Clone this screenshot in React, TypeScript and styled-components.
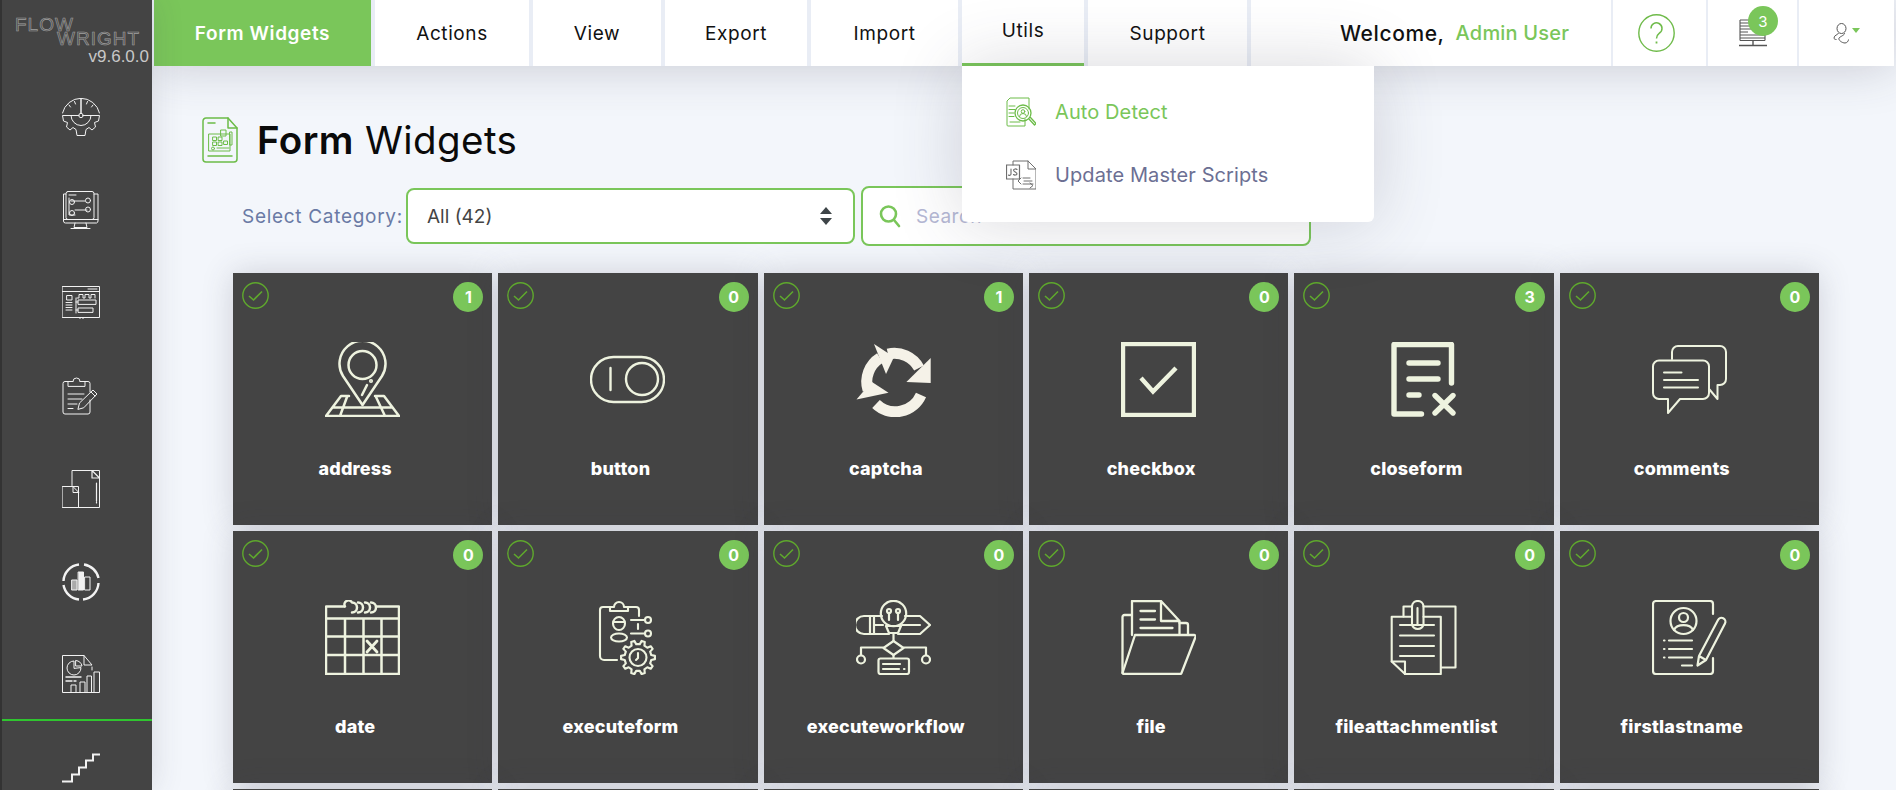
import React from 'react';
import styled, { createGlobalStyle } from 'styled-components';

const green = '#7ac65a';
const ui = `Inter, "Noto Sans", sans-serif`;

const GlobalStyle = createGlobalStyle`
  html, body { margin: 0; padding: 0; height: 100%; overflow: hidden; background: #f3f6fb; }
  * { box-sizing: border-box; }
  body { font-family: ${ui}; }
`;

// draws a toothed gear outline, used by the executeform icon
function gearPath(cx: number, cy: number, outer: number, inner: number, teeth: number) {
  const pts: string[] = [];
  const step = (Math.PI * 2) / teeth;
  for (let i = 0; i < teeth; i++) {
    const a = i * step;
    const w = step * 0.22;
    [[-w * 1.3, inner], [-w * 0.7, outer], [w * 0.7, outer], [w * 1.3, inner]].forEach(([d, r]) => {
      pts.push(`${(cx + Math.cos(a + d) * r).toFixed(2)} ${(cy + Math.sin(a + d) * r).toFixed(2)}`);
    });
  }
  return 'M' + pts.join('L') + 'Z';
}

const Svg = styled.svg<{ $sw?: number }>`
  display: block;
  fill: none;
  stroke: currentColor;
  stroke-width: ${(p) => p.$sw ?? 2};
  stroke-linecap: round;
  stroke-linejoin: round;
`;

const W = ({ children, sw }: { children: React.ReactNode; sw?: number }) => (
  <Svg width="75" height="75" viewBox="0 0 75 75" $sw={sw}>{children}</Svg>
);

const AddressIcon = () => (
  <W sw={2.5}>
    <path d="M37.5 63L18 34A23 23 0 1 1 57 34Z" />
    <circle cx="37.5" cy="23" r="14" />
    <path d="M42 43L37 53" />
    <circle cx="46" cy="39" r="0.8" />
    <path d="M24 54H16L1 74H74L59 54H50M8 65.5H67M22 55L15 74M51 55L60 74" />
  </W>
);

const ButtonIcon = () => (
  <W sw={2.4}>
    <rect x="1" y="15" width="73" height="45" rx="22.5" />
    <circle cx="52" cy="37" r="16" />
    <path d="M20.5 26V48" />
  </W>
);

const CaptchaIcon = () => (
  <W sw={11}>
    <g stroke="#f5f2e8" fill="none" strokeLinecap="butt">
      <path d="M32 12A28 28 0 0 1 63 26" />
      <path d="M65 53A28 28 0 0 1 20 62" />
      <path d="M12 48A28 28 0 0 1 24 16" />
    </g>
    <g fill="#f5f2e8" stroke="none">
      <path d="M74.7 16V41L50.4 40Z" />
      <path d="M18 2L38 15L30 32Z" />
      <path d="M0.5 57.5L15.6 39.7L32.5 50.7Z" />
    </g>
  </W>
);

const CheckboxIcon = () => (
  <W sw={4.4}>
    <g strokeLinecap="butt" strokeLinejoin="miter">
      <rect x="2" y="2" width="71" height="71" />
      <path d="M20 36L32 49.5L55 26" />
    </g>
  </W>
);

const CloseformIcon = () => (
  <W sw={5.4}>
    <path d="M65.5 41V2.5H8V72H35.5" />
    <path d="M23 21H52M23 37H52M23 53H33M49 53.5L67 71M67 53.5L49 71" />
  </W>
);

const CommentsIcon = () => (
  <W sw={2}>
    <path d="M20 17V10A6 6 0 0 1 26 4H68A6 6 0 0 1 74 10V37A6 6 0 0 1 68 43H65.5V57L57.5 47.5" />
    <path d="M7 18.5H51A6 6 0 0 1 57 24.5V51A6 6 0 0 1 51 57H28L16 71V57H7A6 6 0 0 1 1 51V24.5A6 6 0 0 1 7 18.5Z" />
    <path d="M12 30.5H29.5M12 38H46M12 45.5H46" />
  </W>
);

const DateIcon = () => (
  <W sw={2.5}>
    <g strokeLinecap="butt">
      <path d="M20 6.5H1V74H74V6.5H51" />
      <path d="M1 18.5H74M1 36.500H74M1 55H74M20 18.5V74M38.500 18.5V74M56.500 18.5V74" />
    </g>
    <path d="M42 41L52 52M52 41L42 52" strokeWidth="2.800" />
    <path d="M20 6.500A4 4 0 0 1 27 2.500A5 5 0 0 1 27 12.500M33 2.500A5 5 0 0 1 33 12.500M40 2.500A5 5 0 0 1 40 12.500M46 2.500A5 5 0 0 1 46 12.500" />
  </W>
);

const ExecuteFormIcon = () => (
  <W sw={2.1}>
    <path d="M20 7H13A3 3 0 0 0 10 10V56A4 4 0 0 0 14 60H27M38 7H46A3 3 0 0 1 49 10V16" />
    <path d="M20 11V7H24A5 5 0 0 1 34 7H38V11Z" />
    <ellipse cx="29" cy="23.500" rx="6" ry="6.500" />
    <path d="M23.500 22H34.500" />
    <ellipse cx="29" cy="37.500" rx="8" ry="4" />
    <path d="M41 20H55M41 33.500H55M48 24V29" />
    <circle cx="58" cy="20" r="3" />
    <circle cx="58" cy="33.500" r="3" />
    <path d={gearPath(48, 57.5, 17, 13.5, 10)} />
    <circle cx="48" cy="57.500" r="8.500" />
    <path d="M48 53V58L46 60" />
  </W>
);

const ExecuteWorkflowIcon = () => (
  <W sw={2.2}>
    <circle cx="37.500" cy="13.500" r="12.700" />
    <path d="M33 20V13M42 20V13M30 26H45L42 33H33ZM37.500 33V41" />
    <circle cx="33" cy="11" r="2" />
    <circle cx="42" cy="11" r="2" />
    <path d="M26 16H8A8.500 8.500 0 0 0 8 34H33M42 34H64L74 25L64 16H49" />
    <path d="M14 16V34M18 16V34M18 25H27M46 25H64" />
    <path d="M37.500 41L47.500 48L37.500 55L27.500 48Z" />
    <path d="M27 47.500H5V55M48 47.500H70V55M37.500 55V58" />
    <circle cx="5" cy="59.500" r="4" />
    <circle cx="70" cy="59.500" r="4" />
    <rect x="22.500" y="58.500" width="30.500" height="15.500" rx="2" />
    <path d="M27 64H44M27 69H43M48 69H48.500" />
  </W>
);

const FileIcon = () => (
  <W sw={2.3}>
    <path d="M11 35V1H40L58.500 21V34M40 1V21H58.500" />
    <path d="M11 15H3.500A2 2 0 0 0 1.500 17V73M58.500 23H65A2 2 0 0 1 67 25V34" />
    <path d="M14 35H73A1.500 1.500 0 0 1 74.500 37L60.500 73A1.500 1.500 0 0 1 59 74H2.500A1.500 1.500 0 0 1 1.500 73Z" />
    <path d="M19.500 11H34M19.500 19.500H34M19.500 28H51.500" />
  </W>
);

const FileAttachmentIcon = () => (
  <W sw={2.1}>
    <path d="M17.500 16.500V6.500H25.500M37.500 6.500H69.500V67.500H55" />
    <path d="M25.500 16.700H5.700V61.500L19 74H54.800V16.700H37.500" />
    <path d="M5.700 61.500H19V74" />
    <path d="M26 21V6A5.800 5.800 0 0 1 37.500 6V24A5.800 5.800 0 0 1 26 24V21M31.500 8V24" />
    <path d="M14 25H48M14 35.500H48M14 46H48M14 56H48" />
  </W>
);

const FirstLastIcon = () => (
  <W sw={2.2}>
    <path d="M61 14V4A3 3 0 0 0 58 1H4A3 3 0 0 0 1 4V71A3 3 0 0 0 4 74H58A3 3 0 0 0 61 71V58" />
    <circle cx="31.500" cy="21" r="13" />
    <circle cx="31.500" cy="17.500" r="4.500" />
    <path d="M22 30A10 7 0 0 1 41 30" />
    <path d="M17 40.500H40M17 49H40M17 57.500H40M30 65.500H40M12 40.500H12.500M12 49H12.500M12 57.500H12.500" />
    <path d="M45.500 65.500L47 56L66 20A3.500 3.500 0 0 1 73 23.500L54 60ZM47 56L54 60" />
  </W>
);

// sidebar icons, 38px box, thin white line art
const S = ({ children, h = 38 }: { children: React.ReactNode; h?: number }) => (
  <Svg width="38" height={h} viewBox={`0 0 38 ${h}`} $sw={1}>{children}</Svg>
);

const GaugeIcon = () => (
  <S>
    <path d="M0.500 15A19 19 0 0 1 37.500 15" />
    <path d="M19 0.500V15" strokeWidth="1.500" />
    <path d="M7 7L8.500 9M12.500 3.500L13.500 6M25.500 3.500L24.500 6M31 7L29.500 9" />
    <circle cx="19" cy="17.500" r="2.200" />
    <path d="M17 17.500H0.500L1.500 23L5.500 24.500L4.500 29L8 32L11 29.500L14 31.500L15 37.500H23L24 31.500L27 29.500L30 32L33.500 29L32.500 24.500L36.500 23L37.500 17.500H21" />
    <path d="M9 17.500A10 10 0 0 0 29 17.500" />
  </S>
);

const MonitorIcon = () => (
  <S>
    <rect x="4" y="0.500" width="28" height="28" rx="2" />
    <path d="M4 3H1.500V30A2 2 0 0 0 3.500 32H34.500A2 2 0 0 0 36 30V3H32M1.500 28.500H36M13 32L12 36.500H25L24 32M9 37.500H28" />
    <path d="M7 4H14M9 10H23M13 19H25M7 7V24H13" />
    <circle cx="26" cy="9.500" r="2.500" />
    <circle cx="10" cy="11" r="2.500" />
    <circle cx="26" cy="18.500" r="2.500" />
    <circle cx="10" cy="22" r="2.500" />
  </S>
);

const LayoutIcon = () => (
  <S h={33}>
    <rect x="0.500" y="0.500" width="37" height="31" />
    <path d="M0.500 5.500H37.500M26 3H35M5 9.500H10V14H5ZM4 16.500H10M4 19H10M4 21.500H10M4 24H10" />
    <path d="M15 12H17V8.500H21V12H23V8.500H27V12H29V8.500H33V12M14 12V27" />
    <path d="M16 18V14H34V18ZM16 26V22H31V26Z" />
    <path d="M14 16H16M14 24H16M18 32V33M21 32V33" />
  </S>
);

const ClipboardIcon = () => (
  <S>
    <path d="M11 4.500H3A2 2 0 0 0 1 6.500V35A2 2 0 0 0 3 37H26A2 2 0 0 0 28 35V23M28 15V6.500A2 2 0 0 0 26 4.500H18" />
    <path d="M6 9V4.500H11A3.500 3.500 0 0 1 18 4.500H23V9Z" />
    <path d="M6 17H22M6 22H20M6 27H15M6 31.500H11" />
    <path d="M16 32L17.500 26L31 13L35 17L22 30.500ZM29 15L33 19" />
  </S>
);

const DocsIcon = () => (
  <S>
    <path d="M10 15.500V0.500H37.500V37.500H16.500" />
    <rect x="0.500" y="16.500" width="16" height="21" />
    <path d="M30 0.500V8H37.500M30 0.500L37.500 8M34.500 13V31M34.500 32V33" strokeWidth="1.200" />
    <path d="M11 17V22.500H16.500Z" />
  </S>
);

const ChartIcon = () => (
  <S>
    <g strokeWidth="2.400" strokeLinecap="butt">
      <path d="M22 1.500A17.500 17.500 0 0 1 36.500 15M36.500 20A17.500 17.500 0 0 1 21 36.500M17 36.500A17.500 17.500 0 0 1 1.500 22M1.500 18A17.500 17.500 0 0 1 17 1.500" />
    </g>
    <rect x="10" y="17" width="5" height="10" fill="#aaa" />
    <rect x="16.500" y="9" width="5" height="18" fill="currentColor" />
    <rect x="23" y="14" width="5" height="13" />
  </S>
);

const ReportIcon = () => (
  <S>
    <path d="M30 12V15M26 37.500H0.500V0.500H22L30 10H22V0.500" />
    <path d="M19 13A7 7 0 1 1 12 6V13Z" />
    <path d="M14 5.500A7 7 0 0 1 20 11H14Z" />
    <path d="M4 22H19M4 26H10M12 26H14" strokeWidth="1.400" />
    <path d="M9 37.500V30H14V37.500M18 37.500V27H23V37.500M25 37.500V21H29.500V37.500M32 37.500V17H37.500V37.500H26" />
  </S>
);

const StairsIcon = () => (
  <S h={30}>
    <g strokeWidth="2" strokeLinecap="square" strokeLinejoin="miter">
      <path d="M1 28.500H10V21.500H17V14.500H24V7.500H31V1.500H37" />
    </g>
  </S>
);

const TitleIcon = () => (
  <Svg width="36" height="46" viewBox="0 0 36 46" $sw={1.5}>
    <path d="M1 4A3 3 0 0 1 4 1H26L35 11V42A3 3 0 0 1 32 45H4A3 3 0 0 1 1 42Z" />
    <path d="M26 1V11H35M6 6H13M6 39H30" />
    <g strokeWidth="1">
      <rect x="7" y="17" width="21" height="17" />
      <rect x="19" y="13" width="5" height="6" />
      <rect x="28" y="15" width="2" height="13" />
      <rect x="11" y="20" width="3.500" height="3.500" />
      <rect x="16.500" y="20" width="3.500" height="3.500" />
      <rect x="22" y="24" width="3.500" height="3.500" />
      <rect x="11" y="25" width="3.500" height="3.500" />
      <rect x="16.500" y="25" width="3.500" height="3.500" />
      <circle cx="11" cy="31.500" r="1.500" />
      <path d="M15 31H27" />
    </g>
  </Svg>
);

const AutoDetectIcon = () => (
  <Svg width="30" height="30" viewBox="0 0 30 30" $sw={1}>
    <path d="M19 22V29H2A1 1 0 0 1 1 28V4L4 1H23V12" />
    <circle cx="17" cy="16" r="8" strokeWidth="1.300" />
    <circle cx="17" cy="16" r="5.500" />
    <circle cx="17" cy="14.500" r="1.800" />
    <path d="M13.500 19.500A3.500 3 0 0 1 20.500 19.500" />
    <path d="M23 22L28.500 28L30 26.500L24.500 20.500" strokeWidth="1.300" />
    <path d="M3 9H9M3 12.500H9M3 16H8M3 19.500H8M4 25H14" />
  </Svg>
);

const ScriptIcon = () => (
  <Svg width="30" height="30" viewBox="0 0 30 30" $sw={1}>
    <path d="M7 5V1H22L30 9V29H7V19" />
    <path d="M22 1V9H30" />
    <rect x="0.500" y="5" width="13" height="14" strokeWidth="1.200" />
    <path d="M5 9V14A1.500 1.500 0 0 1 2.500 15M11 9.500A2 1.500 0 0 0 7.500 10C7.500 12 11 12 11 14A2 1.500 0 0 1 7.500 14.500" strokeWidth="1.100" />
    <path d="M17 18H24M18 21H26M17 24H27M15 18L12 21L15 24M24 23L27 25.500L24 28" />
  </Svg>
);

const CheckCircle = () => (
  <svg width="27" height="27" viewBox="0 0 27 27" fill="none" stroke="#5fa82d" strokeWidth="1.400">
    <circle cx="13.500" cy="13.500" r="12.700" />
    <path d="M7 14L11.500 18L20 9.500" strokeWidth="1.600" />
  </svg>
);

const HelpIcon = () => (
  <svg width="37" height="38" viewBox="0 0 37 38" fill="none" stroke="#6fbb4a" strokeWidth="1.400">
    <ellipse cx="18.500" cy="19" rx="17.700" ry="18.200" />
    <path d="M13 14.500A5.500 5.500 0 1 1 21.500 19C19.500 20.500 18.500 21 18.500 24.500" strokeWidth="1.500" />
    <path d="M18.500 27.500V29.500" strokeWidth="1.800" />
  </svg>
);

const ServerIcon = () => (
  <svg width="28" height="28" viewBox="0 0 28 28" fill="none" stroke="#555" strokeWidth="1.100">
    <path d="M1 1H26M1 4H26M1 7H26M1 10H26M1 13H26M1 16H26M1 19H26M1 21.500H26M1 1V21.500M26 1V21.500" />
    <rect x="9" y="12" width="8" height="3" fill="#fff" stroke="none" />
    <path d="M0 26.500H28M14 21.500V26.500" strokeWidth="1.400" />
  </svg>
);

const UserIcon = () => (
  <svg width="17" height="21" viewBox="0 0 17 21" fill="none" stroke="#555" strokeWidth="1">
    <ellipse cx="8.500" cy="5.500" rx="4.500" ry="5" />
    <path d="M5.500 10C5 12 1 12 1 15C1 16 2 16.500 3.500 16.500M11.500 10C12 12 8 13 6 15C5 17 9 20 12 20C14 20 15.500 18 15.500 16.500" />
  </svg>
);

const tabs = [
  { label: 'Form Widgets', w: 217 },
  { label: 'Actions', w: 154 },
  { label: 'View', w: 128 },
  { label: 'Export', w: 142 },
  { label: 'Import', w: 147 },
  { label: 'Utils', w: 122 },
  { label: 'Support', w: 159 },
];

const widgets = [
  { name: 'address', count: 1, icon: <AddressIcon /> },
  { name: 'button', count: 0, icon: <ButtonIcon /> },
  { name: 'captcha', count: 1, icon: <CaptchaIcon /> },
  { name: 'checkbox', count: 0, icon: <CheckboxIcon /> },
  { name: 'closeform', count: 3, icon: <CloseformIcon /> },
  { name: 'comments', count: 0, icon: <CommentsIcon /> },
  { name: 'date', count: 0, icon: <DateIcon /> },
  { name: 'executeform', count: 0, icon: <ExecuteFormIcon /> },
  { name: 'executeworkflow', count: 0, icon: <ExecuteWorkflowIcon /> },
  { name: 'file', count: 0, icon: <FileIcon /> },
  { name: 'fileattachmentlist', count: 0, icon: <FileAttachmentIcon /> },
  { name: 'firstlastname', count: 0, icon: <FirstLastIcon /> },
];

export default function App() {
  return (
    <Page>
      <GlobalStyle />
      <Sidebar>
        <Logo>
          <LogoLine>FLOW</LogoLine>
          <LogoLine $indent>WRIGHT</LogoLine>
          <Version>v9.6.0.0</Version>
        </Logo>
        <SideItem><GaugeIcon /></SideItem>
        <SideItem><MonitorIcon /></SideItem>
        <SideItem><LayoutIcon /></SideItem>
        <SideItem><ClipboardIcon /></SideItem>
        <SideItem><DocsIcon /></SideItem>
        <SideItem><ChartIcon /></SideItem>
        <SideItem $divider><ReportIcon /></SideItem>
        <SideItem><StairsIcon /></SideItem>
      </Sidebar>

      <Main>
        <TopBar>
          {tabs.map((t) => (
            <Tab key={t.label} $w={t.w} $active={t.label === 'Form Widgets'} $open={t.label === 'Utils'}>
              {t.label}
            </Tab>
          ))}
          <Welcome>
            Welcome,<AdminName>Admin User</AdminName>
          </Welcome>
          <HelpCell><HelpIcon /></HelpCell>
          <BarCell $w={89}>
            <ServerIcon />
            <TopBadge>3</TopBadge>
          </BarCell>
          <BarCell $w={95}>
            <UserIcon />
            <Caret />
          </BarCell>
        </TopBar>

        <Menu>
          <MenuItem $active>
            <AutoDetectIcon />
            Auto Detect
          </MenuItem>
          <MenuItem>
            <ScriptIcon />
            Update Master Scripts
          </MenuItem>
        </Menu>

        <Content>
          <TitleRow>
            <TitleIconWrap><TitleIcon /></TitleIconWrap>
            <Title><strong>Form</strong> Widgets</Title>
          </TitleRow>

          <Filters>
            <FilterLabel>Select Category:</FilterLabel>
            <SelectBox>
              All (42)
              <SortArrows />
            </SelectBox>
            <SearchBox>
              <svg width="22" height="24" viewBox="0 0 22 24" fill="none" stroke={green} strokeWidth="2.600">
                <circle cx="9.500" cy="10" r="7.500" />
                <path d="M15 16L20 22" strokeLinecap="round" />
              </svg>
              <SearchInput placeholder="Search" readOnly />
            </SearchBox>
          </Filters>

          <Grid>
            {widgets.map((w) => (
              <Card key={w.name}>
                <CheckSlot><CheckCircle /></CheckSlot>
                <CountBadge>{w.count}</CountBadge>
                <CardIcon>{w.icon}</CardIcon>
                <CardLabel>{w.name}</CardLabel>
              </Card>
            ))}
            {[1, 2, 3, 4, 5, 6].map((i) => <Card key={i} />)}
          </Grid>
        </Content>
      </Main>
    </Page>
  );
}

const Page = styled.div`
  display: flex;
  width: 1896px;
  height: 790px;
  overflow: hidden;
  background: #f3f6fb;
`;

const Sidebar = styled.aside`
  position: relative;
  z-index: 3;
  flex: 0 0 152px;
  background: #444;
  border-left: 2px solid #333;
  box-shadow: 0 0 30px rgba(60, 60, 80, 0.16);
`;

const Logo = styled.div`
  height: 70px;
  padding: 18px 3px 0 0;
  display: flex;
  flex-direction: column;
  font-family: "Liberation Sans", sans-serif;
`;

const LogoLine = styled.div<{ $indent?: boolean }>`
  font-size: 19px;
  line-height: 14px;
  height: 14px;
  margin-left: ${(p) => (p.$indent ? '55px' : '13px')};
  letter-spacing: 1px;
  color: #505050;
  -webkit-text-stroke: 0.6px #a0a0a0;
`;

const Version = styled.div`
  font-size: 17px;
  line-height: 20px;
  margin-top: 1px;
  text-align: right;
  color: #c8c8c8;
`;

const SideItem = styled.div<{ $divider?: boolean }>`
  height: 93px;
  display: flex;
  align-items: center;
  justify-content: center;
  padding-left: 8px;
  color: #f2f2f2;
  border-bottom: ${(p) => (p.$divider ? '2px solid #2fc52f' : 'none')};
`;

const Main = styled.div`
  position: relative;
  flex: 1;
  min-width: 0;
`;

const TopBar = styled.header`
  position: relative;
  z-index: 2;
  display: flex;
  height: 66px;
  gap: 4px;
  padding-left: 2px;
  margin-right: 2px;
  background: #e9edf5;
  box-shadow: 0 0 50px rgba(60, 60, 80, 0.24);
`;

const Tab = styled.div<{ $w: number; $active?: boolean; $open?: boolean }>`
  flex: 0 0 ${(p) => p.$w}px;
  display: flex;
  align-items: center;
  justify-content: center;
  background: ${(p) => (p.$active ? green : '#fff')};
  color: ${(p) => (p.$active ? '#fff' : '#111')};
  font-size: 19px;
  font-weight: ${(p) => (p.$active ? 600 : 400)};
  letter-spacing: 0.6px;
  border-bottom: ${(p) => (p.$open ? `3px solid ${green}` : 'none')};
  padding-bottom: ${(p) => (p.$open ? '3px' : '0')};
`;

const Welcome = styled.div`
  flex: 1;
  display: flex;
  align-items: center;
  padding-left: 89px;
  background: #fff;
  color: #111;
  font-size: 21px;
  font-weight: 500;
  letter-spacing: 0.6px;
`;

const AdminName = styled.span`
  margin-left: 11px;
  color: ${green};
  font-size: 20px;
  letter-spacing: 0.2px;
`;

const BarCell = styled.div<{ $w: number }>`
  position: relative;
  flex: 0 0 ${(p) => p.$w}px;
  display: flex;
  align-items: center;
  justify-content: center;
  background: #fff;
  margin-left: -2px;
`;

const HelpCell = styled(BarCell).attrs({ $w: 93 })`
  padding-right: 6px;
`;

const TopBadge = styled.span`
  position: absolute;
  top: 6px;
  left: 40px;
  width: 30px;
  height: 30px;
  border-radius: 50%;
  background: ${green};
  color: #fff;
  font-size: 15px;
  display: flex;
  align-items: center;
  justify-content: center;
`;

const Caret = styled.span`
  width: 0;
  height: 0;
  margin: -6px 0 0 2px;
  border-left: 4.5px solid transparent;
  border-right: 4.5px solid transparent;
  border-top: 5px solid ${green};
`;

const Menu = styled.nav`
  position: absolute;
  z-index: 4;
  top: 66px;
  left: 810px;
  width: 412px;
  height: 156px;
  padding: 31px 44px;
  background: #fff;
  border-radius: 0 0 6px 6px;
  box-shadow: 0 0 70px rgba(60, 60, 80, 0.2);
  display: flex;
  flex-direction: column;
  gap: 33px;
`;

const MenuItem = styled.a<{ $active?: boolean }>`
  display: flex;
  align-items: center;
  gap: 19px;
  height: 30px;
  white-space: nowrap;
  font-size: 20px;
  letter-spacing: 0.1px;
  color: ${(p) => (p.$active ? green : '#6c6f93')};
  svg { color: ${(p) => (p.$active ? '#6cbc48' : '#6e6e6e')}; flex: none; }
`;

const Content = styled.main`
  padding-top: 51px;
`;

const TitleRow = styled.div`
  display: flex;
  align-items: center;
  gap: 19px;
  padding-left: 50px;
  height: 46px;
`;

const TitleIconWrap = styled.div`
  color: #6cbc48;
`;

const Title = styled.h1`
  margin: 0;
  font-size: 38.500px;
  font-weight: 400;
  color: #0a0a0a;
  letter-spacing: 0.4px;
  strong { font-weight: 600; }
`;

const Filters = styled.div`
  display: flex;
  align-items: center;
  height: 60px;
  margin-top: 23px;
  padding-left: 90px;
`;

const FilterLabel = styled.label`
  width: 164px;
  font-size: 19px;
  letter-spacing: 0.7px;
  color: #6a7aa5;
  white-space: nowrap;
`;

const SelectBox = styled.div`
  display: flex;
  align-items: center;
  justify-content: space-between;
  width: 449px;
  height: 56px;
  margin-right: 6px;
  padding: 0 21px 0 19px;
  background: #fff;
  border: 2px solid ${green};
  border-radius: 8px;
  font-size: 19px;
  color: #444;
`;

const SortArrows = styled.span`
  position: relative;
  width: 12px;
  height: 18px;
  &::before, &::after {
    content: '';
    position: absolute;
    left: 0;
    border-left: 6px solid transparent;
    border-right: 6px solid transparent;
  }
  &::before { top: 0; border-bottom: 7px solid #3e4548; }
  &::after { bottom: 0; border-top: 7px solid #3e4548; }
`;

const SearchBox = styled.div`
  display: flex;
  align-items: center;
  gap: 13px;
  width: 450px;
  height: 60px;
  padding: 0 16px;
  background: #fff;
  border: 2px solid ${green};
  border-radius: 8px;
`;

const SearchInput = styled.input`
  border: 0;
  outline: 0;
  flex: 1;
  font-family: ${ui};
  font-size: 19px;
  letter-spacing: 0.5px;
  background: transparent;
  &::placeholder { color: #b5b8d4; }
`;

const Grid = styled.div`
  display: grid;
  grid-template-columns: repeat(6, 259.33px);
  grid-auto-rows: 252px;
  gap: 6px;
  margin: 27px 0 0 81px;
`;

const Card = styled.div`
  position: relative;
  background: #444;
  box-shadow: 0 0 30px rgba(60, 60, 80, 0.2);
`;

const CheckSlot = styled.div`
  position: absolute;
  top: 9px;
  left: 9px;
  line-height: 0;
`;

const CountBadge = styled.span`
  position: absolute;
  top: 9px;
  right: 9px;
  width: 30px;
  height: 30px;
  border-radius: 50%;
  background: ${green};
  color: #fff;
  font-size: 16px;
  font-weight: 700;
  display: flex;
  align-items: center;
  justify-content: center;
`;

const CardIcon = styled.div`
  display: flex;
  justify-content: center;
  padding-top: 69px;
  color: #eef3df;
`;

const CardLabel = styled.div`
  margin-top: 40px;
  padding-right: 15px;
  text-align: center;
  color: #fff;
  font-size: 18px;
  font-weight: 800;
  letter-spacing: 0.2px;
  line-height: 24px;
`;
